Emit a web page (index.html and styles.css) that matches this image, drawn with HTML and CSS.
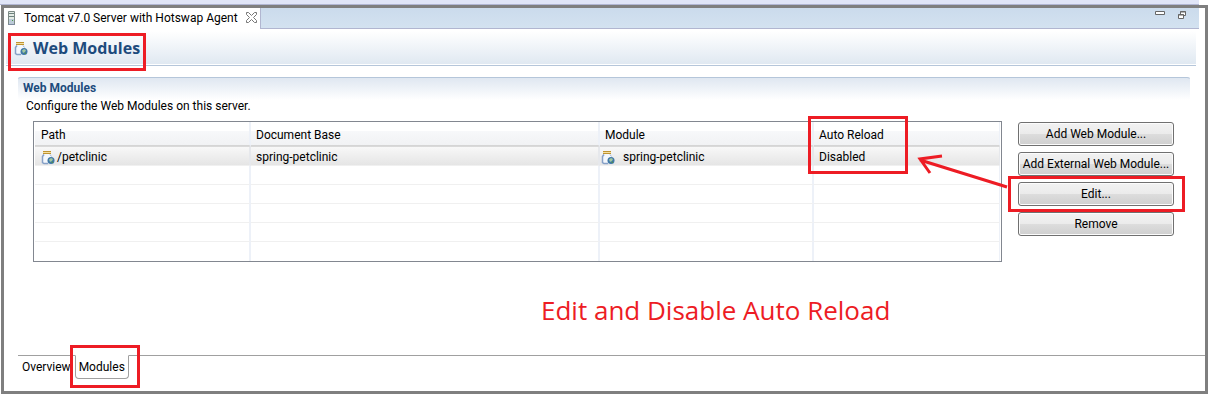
FILE: index.html
```
<!DOCTYPE html>
<html lang="en">
<head>
    <meta charset="UTF-8">
    <meta name="viewport" content="width=device-width, initial-scale=1.0">
    <title>Tomcat v7.0 Server with Hotswap Agent</title>
    <link rel="stylesheet" href="styles.css">
</head>
<body>

    <!-- Shared icons -->
    <svg class="sprite" aria-hidden="true">
        <symbol id="jar" viewBox="0 0 14 15">
            <path d="M2 1.500h8M2 3.500h8" stroke="#bf9330" fill="none"/>
            <path d="M2 2.500h8" stroke="#f3dfa0" fill="none"/>
            <path d="M3 4h6l2 2.500v7H2L1 12V6.500z" fill="#f3f7fc"/>
            <path d="M3 4.500L1.500 6.500v6L3 13.500h4" fill="none" stroke="#86a0c6" stroke-width="1.500"/>
            <path d="M9 4.500l1.500 2" fill="none" stroke="#9db3d2"/>
            <circle cx="10" cy="10.500" r="3.500" fill="#3f77a8"/>
            <path d="M8 9.500l2-1.500 2 1-1 2-2 1z" fill="#a3c8a0"/>
            <path d="M10 13l2-2v2z" fill="#4f8f4b"/>
        </symbol>
    </svg>

    <div class="top-strip"></div>

    <div class="window">
        <header class="tab-bar">
            <div class="tab">
                <svg class="server-icon" width="9" height="16" viewBox="0 0 9 16" aria-hidden="true">
                    <path d="M1.500 1.500h6v13h-6z" fill="#e4ebe6" stroke="#7d8a86"/>
                    <path d="M2 3.500h5M2 6.500h5" stroke="#6d827d"/>
                    <path d="M2 9h5v5H2z" fill="#bccbd8"/>
                    <path d="M5 10h1v1H5z" fill="#4b9a46"/>
                    <path d="M1 14.500h7" stroke="#7e8a9f"/>
                </svg>
                <span>Tomcat v7.0 Server with Hotswap Agent</span>
                <button class="icon-button" type="button" aria-label="Close">
                    <svg width="11" height="11" viewBox="0 0 11 11">
                        <path d="M.5.5h2l3 3 3-3h2v2l-3 3 3 3v2h-2l-3-3-3 3h-2v-2l3-3-3-3z" fill="#fff" stroke="#777"/>
                    </svg>
                </button>
            </div>
            <div class="window-buttons">
                <button class="icon-button" type="button" aria-label="Minimize">
                    <svg width="10" height="12" viewBox="0 0 10 12">
                        <path d="M.5 1.500h9v3h-9z" fill="#fff" stroke="#666"/>
                    </svg>
                </button>
                <button class="icon-button" type="button" aria-label="Restore">
                    <svg width="8" height="12" viewBox="0 0 8 12">
                        <path d="M2.500 1.500h5v4h-5z" fill="#fff" stroke="#666"/>
                        <path d="M2 2h6" stroke="#666"/>
                        <path d="M.5 4.500h5v4h-5z" fill="#fff" stroke="#666"/>
                        <path d="M0 5h6" stroke="#666"/>
                    </svg>
                </button>
            </div>
        </header>

        <div class="form-header">
            <h1 class="marked">
                <svg class="jar" aria-hidden="true"><use href="#jar"/></svg>
                Web Modules
            </h1>
        </div>

        <section class="section">
            <h2>Web Modules</h2>
            <p>Configure the Web Modules on this server.</p>

            <div class="content">
                <div class="table-box">
                    <table>
                        <colgroup>
                            <col class="col-path">
                            <col class="col-base">
                            <col class="col-module">
                            <col>
                        </colgroup>
                        <thead>
                            <tr>
                                <th>Path</th>
                                <th>Document Base</th>
                                <th>Module</th>
                                <th class="marked">Auto Reload</th>
                            </tr>
                        </thead>
                        <tbody>
                            <tr class="selected">
                                <td><svg class="jar" aria-hidden="true"><use href="#jar"/></svg>/petclinic</td>
                                <td>spring-petclinic</td>
                                <td class="module"><svg class="jar" aria-hidden="true"><use href="#jar"/></svg>spring-petclinic</td>
                                <td>Disabled</td>
                            </tr>
                            <tr><td></td><td></td><td></td><td></td></tr>
                            <tr><td></td><td></td><td></td><td></td></tr>
                            <tr><td></td><td></td><td></td><td></td></tr>
                            <tr><td></td><td></td><td></td><td></td></tr>
                            <tr><td></td><td></td><td></td><td></td></tr>
                        </tbody>
                    </table>
                </div>

                <div class="actions">
                    <button type="button">Add Web Module...</button>
                    <button type="button">Add External Web Module...</button>
                    <div class="edit marked">
                        <button type="button">Edit...</button>
                        <svg class="arrow" width="94" height="40" viewBox="0 0 94 40" aria-hidden="true">
                            <path d="M92 35L5 8M27 4L5 7L15 21" fill="none" stroke="#ed1c24" stroke-width="3"/>
                        </svg>
                    </div>
                    <button type="button">Remove</button>
                </div>
            </div>
        </section>

        <p class="note">Edit and Disable Auto Reload</p>

        <nav class="page-tabs">
            <a href="#overview">Overview</a>
            <a class="active marked" href="#modules">Modules</a>
        </nav>
    </div>

</body>
</html>
```
FILE: styles.css
```
*, *::after {
    box-sizing: border-box;
}

body {
    margin: 0;
    background-color: #fff;
    color: #000;
    font-family: Roboto, 'Open Sans', sans-serif;
    font-size: 12px;
    line-height: 16px;
}

h1, h2, p {
    margin: 0;
}

button {
    font: inherit;
    color: inherit;
}

svg {
    flex: none;
}

.sprite {
    position: absolute;
    width: 0;
    height: 0;
}

.jar {
    width: 14px;
    height: 15px;
}

.top-strip {
    height: 5px;
    margin-right: 16px;
    background-color: #e0e5f7;
    border-bottom: 1px solid #b1b6d3;
}

.window {
    margin: 0 7px 0 1px;
    border: 3px solid #7f7f7f;
}

/* Red highlight around the parts to look at */
.marked {
    position: relative;
}

.marked::after {
    content: "";
    position: absolute;
    border: 3px solid #ed1c24;
    pointer-events: none;
}

/* Editor tab bar */
.tab-bar {
    display: flex;
    justify-content: space-between;
    height: 21px;
    margin-right: 6px;
    background: linear-gradient(#cbdbec, #d3e2f0);
    border-bottom: 1px solid #b1b6d0;
}

.tab {
    display: flex;
    align-items: center;
    gap: 8px;
    width: 257px;
    height: 21px;
    padding: 0 7px 2px 3px;
    background-color: #fff;
    border-right: 1px solid #b1b6d0;
    white-space: nowrap;
}

.tab .icon-button {
    margin-left: auto;
}

.icon-button {
    display: flex;
    padding: 0;
    border: 0;
    background: none;
}

.window-buttons {
    display: flex;
    align-items: flex-start;
    gap: 13px;
    padding: 2px 13px 0 0;
}

/* Form header */
.form-header {
    height: 35px;
    margin: 2px 9px 0 2px;
    background: linear-gradient(#fff, #dfe8f1);
    border-bottom: 1px solid #b5c6da;
    box-shadow: inset 0 -1px #fff;
}

h1 {
    display: inline-flex;
    align-items: center;
    gap: 5px;
    padding: 5px 8px 6px;
    color: #1d4b7d;
    font-family: 'Open Sans', sans-serif;
    font-size: 16px;
    line-height: 24px;
}

h1.marked::after {
    inset: 2px 2px -5px 2px;
}

/* Section */
.section {
    margin: 11px 14px 0 13px;
    padding: 0 16px 0 15px;
    border: 1px solid transparent;
    border-top-color: #b5c6da;
    border-radius: 4px 4px 0 0;
    background: linear-gradient(#dfe7f1, #fff) no-repeat 0 0 / 100% 22px;
}

h2 {
    margin-left: -10px;
    padding: 2px 0;
    color: #1d4b7d;
    font-size: 12px;
    line-height: 16px;
}

.section p {
    margin-left: -7px;
}

.content {
    display: flex;
    align-items: flex-start;
    gap: 16px;
    margin-top: 7px;
}

/* Modules table */
.table-box {
    flex: 1;
    padding: 0 1px;
    border: 1px solid #828790;
}

table {
    width: 100%;
    table-layout: fixed;
    border-collapse: separate;
    border-spacing: 0;
}

.col-path {
    width: 216px;
}

.col-base {
    width: 349px;
}

.col-module {
    width: 214px;
}

th, td {
    padding: 0 5px;
    border-right: 2px solid #edf1f8;
    text-align: left;
    white-space: nowrap;
}

th:first-child, td:first-child {
    padding-left: 6px;
}

th:last-child, td:last-child {
    border-right-width: 1px;
}

th {
    height: 24px;
    padding-top: 2px;
    border-bottom: 1px solid #d5d5d5;
    background: linear-gradient(#fff 40%, #f7f8fa 40%, #f1f2f4);
    font-weight: normal;
}

td {
    height: 19px;
    border-bottom: 1px solid #f0f0f0;
}

tr:last-child td {
    border-bottom: 0;
}

.selected td {
    height: 20px;
    padding-top: 2px;
    border-top: 1px solid #d9d9d9;
    border-right-color: #e6e8ec;
    background: linear-gradient(#f8f8f8, #e5e5e5);
}

td .jar {
    margin: -2px 2px -2px 0;
    vertical-align: -2px;
}

td.module {
    padding-left: 1px;
}

.module .jar {
    margin-right: 8px;
}

th.marked::after {
    left: -6px;
    top: -6px;
    width: 100px;
    height: 58px;
}

/* Buttons */
.actions {
    display: flex;
    flex-direction: column;
    gap: 6px;
    width: 156px;
    padding-top: 1px;
}

.actions button {
    display: block;
    width: 100%;
    height: 24px;
    padding: 0;
    border: 1px solid #707070;
    border-radius: 3px;
    background: linear-gradient(#f2f2f2, #ebebeb 50%, #dddddd 50%, #cfcfcf);
    box-shadow: inset 0 0 0 1px #fcfcfc;
    line-height: 20px;
    white-space: nowrap;
}

.edit.marked::after {
    inset: -6px -11px -6px -10px;
}

.arrow {
    position: absolute;
    right: calc(100% + 9px);
    top: -30px;
}

.note {
    margin-top: 29px;
    padding-left: 537px;
    color: #ed1c24;
    font-family: 'Open Sans', sans-serif;
    font-size: 26px;
    line-height: 36px;
}

/* Page tabs */
.page-tabs {
    display: flex;
    height: 36px;
    margin: 27px 0 0 14px;
    border-top: 1px solid #a0a0a0;
}

.page-tabs a {
    height: 24px;
    padding: 3px 4px;
    color: inherit;
    text-decoration: none;
}

.page-tabs .active {
    margin-top: -1px;
    padding: 3px;
    border: 1px solid #a0a0a0;
    border-top-color: #fff;
    border-radius: 0 0 4px 4px;
}

.active.marked::after {
    inset: -11px -12px -10px -6px;
}
```
